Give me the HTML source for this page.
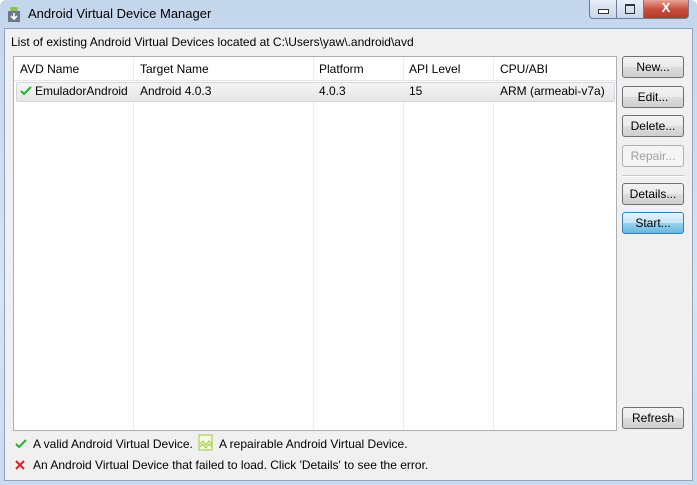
<!DOCTYPE html>
<html><head><style>
body{margin:0;width:697px;height:485px;overflow:hidden;font-family:"Liberation Sans",sans-serif;font-size:12px;color:#000;background:#fff}
.win{position:absolute;left:0;top:0;width:697px;height:485px;background:linear-gradient(#c3d6ec,#d6e4f3 60%,#c9dbef);border-radius:6px 6px 0 0}
.title{position:absolute;left:28px;top:6px;font-size:13px;color:#000}
.content{position:absolute;left:4px;top:28px;width:687px;height:451px;background:#f0f0f0;border:1px solid #8ea4bf}
.abs{position:absolute;white-space:nowrap}
.table{position:absolute;left:8px;top:27px;width:602px;height:373px;background:#fff;border:1px solid #aab0b8}
.col{position:absolute;top:0;height:100%;border-left:1px solid #e8eef7}
.hdr{position:absolute;left:0;top:0;width:602px;height:23px;border-bottom:1px solid #e5e5e5;background:#fff}
.row{position:absolute;left:2px;top:25px;width:597px;height:18px;background:linear-gradient(#f4f4f4,#e6e6e6);border:1px solid #d6d6d6;border-radius:2px}
.btn{position:absolute;left:617px;width:60px;height:20px;border:1px solid #707070;border-radius:3px;background:linear-gradient(#f2f2f2 0%,#ebebeb 50%,#dddddd 51%,#cfcfcf 100%);text-align:center;line-height:20px}
.dis{color:#a0a0a0;border-color:#adb2b5;background:#f4f4f4}
.start{border-color:#3c7fb1;background:linear-gradient(#e5f4fc 0%,#c4e5f6 50%,#98d1ef 51%,#6ab8e0 100%)}
.cb{position:absolute;top:0;width:26px;height:18px;border:1px solid #6d7e94;border-top:none}
</style></head><body>
<div class="win">
<svg class="abs" style="left:7px;top:6px" width="14" height="16"><rect x="1" y="5" width="12" height="11" fill="#6a7a8a"/><rect x="3" y="1" width="8" height="4" rx="2" fill="#8bc34a"/><path d="M7 7v6M4 10l3 3 3-3" stroke="#fff" stroke-width="1.6" fill="none"/></svg>
<div class="title">Android Virtual Device Manager</div>
<div class="cb" style="left:589px;background:linear-gradient(#e8eff8,#c8d6e8);border-radius:0 0 0 4px"><div style="position:absolute;left:8px;top:9px;width:9px;height:3px;border:1px solid #333;background:#fff"></div></div>
<div class="cb" style="left:616px;background:linear-gradient(#e8eff8,#c8d6e8)"><div style="position:absolute;left:8px;top:4px;width:8px;height:7px;border:1px solid #333;border-top-width:2px"></div></div>
<div class="cb" style="left:643px;width:44px;background:linear-gradient(#e8a394,#c75040 50%,#b8382a);border-radius:0 0 4px 0;color:#fff;text-align:center;font-weight:bold;font-size:13px;line-height:16px">X</div>
<div class="content">
<div class="abs" style="left:6px;top:6px">List of existing Android Virtual Devices located at C:\Users\yaw\.android\avd</div>
<div class="table">
<div class="hdr"></div>
<div class="col" style="left:119px"></div><div class="col" style="left:299px"></div><div class="col" style="left:389px"></div><div class="col" style="left:479px"></div>
<div class="row"></div>
<div class="abs" style="left:6px;top:5px">AVD Name</div>
<div class="abs" style="left:126px;top:5px">Target Name</div>
<div class="abs" style="left:305px;top:5px">Platform</div>
<div class="abs" style="left:395px;top:5px">API Level</div>
<div class="abs" style="left:486px;top:5px">CPU/ABI</div>
<svg class="abs" style="left:6px;top:29px" width="12" height="10"><path d="M1 5l3 3 7-7" stroke="#27b02a" stroke-width="2" fill="none"/></svg>
<div class="abs" style="left:21px;top:27px">EmuladorAndroid</div>
<div class="abs" style="left:126px;top:27px">Android 4.0.3</div>
<div class="abs" style="left:305px;top:27px">4.0.3</div>
<div class="abs" style="left:395px;top:27px">15</div>
<div class="abs" style="left:486px;top:27px">ARM (armeabi-v7a)</div>
</div>
<div class="btn" style="top:27px">New...</div>
<div class="btn" style="top:57px">Edit...</div>
<div class="btn" style="top:86px">Delete...</div>
<div class="btn dis" style="top:116px">Repair...</div>
<div class="abs" style="left:617px;top:146px;width:62px;border-top:1px solid #c8c8c8;border-bottom:1px solid #fff"></div>
<div class="btn" style="top:154px">Details...</div>
<div class="btn start" style="top:183px">Start...</div>
<div class="btn" style="top:378px">Refresh</div>
<svg class="abs" style="left:10px;top:410px" width="12" height="10"><path d="M1 5l3 3 7-7" stroke="#27b02a" stroke-width="2" fill="none"/></svg>
<div class="abs" style="left:28px;top:408px">A valid Android Virtual Device.</div>
<svg class="abs" style="left:193px;top:405px" width="15" height="17"><rect x="1" y="1" width="13" height="15" fill="#f4f9e0" stroke="#9ccc3c"/><path d="M2 10l3-3 3 4 3-4 3 3M2 13l3-3 3 4 3-4 3 3" stroke="#9ccc3c" fill="none"/></svg>
<div class="abs" style="left:214px;top:408px">A repairable Android Virtual Device.</div>
<svg class="abs" style="left:10px;top:431px" width="10" height="10"><path d="M1 1l8 8M9 1l-8 8" stroke="#e02020" stroke-width="2"/></svg>
<div class="abs" style="left:28px;top:429px">An Android Virtual Device that failed to load. Click 'Details' to see the error.</div>
</div>
</div>
</body></html>
